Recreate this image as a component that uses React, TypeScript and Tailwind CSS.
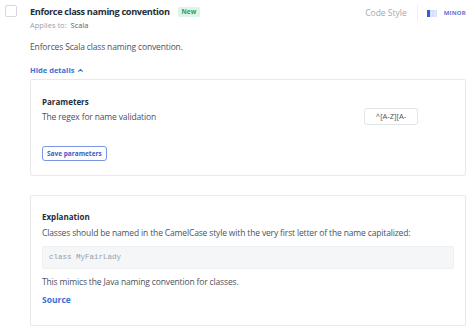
import React from 'react'

function MinorIcon() {
  return (
    <svg width="10" height="7" viewBox="0 0 10 7" className="shrink-0">
      <rect x="0" y="0" width="3" height="7" fill="#3b5bdb" />
      <rect x="3.5" y="0.5" width="2.5" height="6" fill="#e3e8fb" stroke="#c5cff5" strokeWidth="0.6" />
      <rect x="6.8" y="0.5" width="2.5" height="6" fill="#e3e8fb" stroke="#c5cff5" strokeWidth="0.6" />
    </svg>
  )
}

export default function App() {
  return (
    <div
      className="w-[474px] h-[329px] bg-white overflow-hidden text-[#3d4451]"
      style={{ fontFamily: '"Open Sans", "Noto Sans", sans-serif' }}
    >
      <div className="flex pl-[5px] pr-[8px] pt-[5px]">
        <div className="w-[12px] h-[12px] rounded-[2px] border border-[#d5d9df] shrink-0" />
        <div className="ml-[13px] flex-1">
          <div className="flex items-start justify-between">
            <div>
              <div className="flex items-center h-[13px]">
                <span className="text-[9.2px] font-bold text-[#262d3a] tracking-[-0.35px]">
                  Enforce class naming convention
                </span>
                <span className="ml-[8px] bg-[#dcf5e7] text-[#2f9b5e] text-[6.5px] font-bold px-[4px] h-[10px] leading-[10px] rounded-[2px]">
                  New
                </span>
              </div>
              <div className="mt-[2px] text-[7.5px] text-[#9aa1ab]">
                Applies to: <span className="ml-[2px] text-[#5b6370]">Scala</span>
              </div>
            </div>
            <div className="flex items-center h-[16px]">
              <span className="text-[8.5px] text-[#a3a9b2]">Code Style</span>
              <div className="w-px h-[16px] bg-[#eceef1] ml-[10px] mr-[9px]" />
              <MinorIcon />
              <span className="ml-[7px] text-[6px] font-bold text-[#5b73d6] tracking-[0.2px]">MINOR</span>
            </div>
          </div>
          <p className="mt-[10px] text-[8.5px] text-[#4a5260] tracking-[-0.15px]">Enforces Scala class naming convention.</p>
          <div className="mt-[11px] flex items-center text-[7.5px] font-bold text-[#3b6fd6]">
            Hide details
            <svg width="7" height="5" viewBox="0 0 7 5" className="ml-[3px]">
              <path d="M1.2 3.6 L3.5 1.4 L5.8 3.6" stroke="#3b6fd6" strokeWidth="1.1" fill="none" />
            </svg>
          </div>

          <div className="mt-[3px] border border-[#e6e9ed] rounded-[2px] px-[11px] pt-[16px] pb-[13px]">
            <div className="text-[8px] font-bold text-[#262d3a]">Parameters</div>
            <div className="flex items-start justify-between">
              <div className="text-[8.5px] text-[#4a5260] mt-[3px] tracking-[-0.15px]">The regex for name validation</div>
              <div className="mr-[36px] mt-[0px] w-[54px] h-[17px] border border-[#e1e4e8] rounded-[3px] flex items-center justify-center text-[7.5px] text-[#4a5260]">
                ^[A-Z][A-
              </div>
            </div>
            <button className="mt-[21px] border border-[#7c95e3] rounded-[3px] px-[4px] h-[15px] text-[6.5px] font-bold text-[#3b5bc6] leading-none">
              Save parameters
            </button>
          </div>

          <div className="mt-[19px] border border-[#e6e9ed] rounded-[2px] px-[11px] pt-[15px] pb-[18px]">
            <div className="text-[8px] font-bold text-[#262d3a]">Explanation</div>
            <div className="text-[8.5px] text-[#4a5260] mt-[4px] tracking-[-0.15px]">
              Classes should be named in the CamelCase style with the very first letter of the name capitalized:
            </div>
            <div
              className="mt-[7px] bg-[#f4f6f7] border border-[#eef0f2] rounded-[2px] h-[23px] flex items-center px-[6px] text-[7.5px] text-[#9aa0a8]"
              style={{ fontFamily: '"Liberation Mono", "DejaVu Sans Mono", monospace' }}
            >
              class MyFairLady
            </div>
            <div className="text-[8.5px] text-[#4a5260] mt-[7px] tracking-[-0.15px]">This mimics the Java naming convention for classes.</div>
            <div className="text-[8.5px] font-bold text-[#3b6fd6] mt-[5px]">Source</div>
          </div>
        </div>
      </div>
    </div>
  )
}
